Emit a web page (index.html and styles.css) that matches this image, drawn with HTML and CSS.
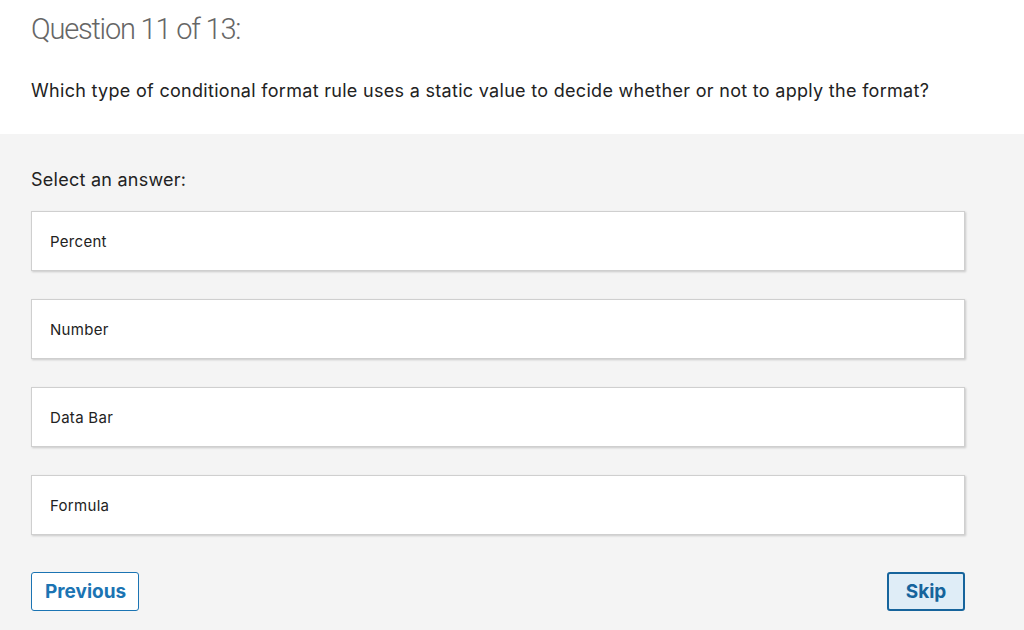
FILE: index.html
```html
<!DOCTYPE html>
<html>
<head>
<meta charset="utf-8">
<link rel="stylesheet" href="styles.css">
</head>
<body>
<header class="head">
  <h1 class="title">Question 11 of 13:</h1>
  <p class="question">Which type of conditional format rule uses a static value to decide whether or not to apply the format?</p>
</header>
<main class="body">
  <p class="prompt">Select an answer:</p>
  <div class="options">
    <div class="option">Percent</div>
    <div class="option">Number</div>
    <div class="option">Data Bar</div>
    <div class="option">Formula</div>
  </div>
  <div class="nav">
    <button class="btn">Previous</button>
    <button class="btn btn-skip">Skip</button>
  </div>
</main>
</body>
</html>
```
FILE: styles.css
```css
html, body { margin: 0; padding: 0; }
body {
  background: #f4f4f4;
  font-family: Inter, "Noto Sans", sans-serif;
  color: #222;
  width: 1024px;
  height: 630px;
  overflow: hidden;
}
.head {
  background: #fff;
  padding: 12px 59px 0 31px;
  height: 122px;
}
.title {
  margin: 0;
  font-family: Roboto, "Liberation Sans", sans-serif;
  font-weight: 300;
  font-size: 29px;
  line-height: 34px;
  color: #666;
  letter-spacing: -1.2px;
}
.question {
  margin: 33px 0 0;
  font-size: 18px;
  line-height: 24px;
  color: #222;
  letter-spacing: 0.3px;
}
.body {
  padding: 0 59px 0 31px;
}
.prompt {
  margin: 0;
  padding-top: 34px;
  font-size: 18px;
  line-height: 24px;
  color: #222;
  letter-spacing: 0.25px;
}
.options {
  margin-top: 19px;
  display: flex;
  flex-direction: column;
  gap: 28px;
}
.option {
  background: #fff;
  border: 1px solid #cfcfcf;
  box-shadow: 1px 1px 2px rgba(0,0,0,0.18);
  height: 58px;
  display: flex;
  align-items: center;
  padding-left: 18px;
  font-size: 15px;
  color: #222;
  letter-spacing: 0.3px;
}
.nav {
  margin-top: 37px;
  display: flex;
  justify-content: space-between;
}
.btn {
  font-family: Inter, "Noto Sans", sans-serif;
  font-weight: 700;
  font-size: 19px;
  color: #1b74b3;
  background: #fff;
  border: 1px solid #1b74b3;
  border-radius: 3px;
  height: 39px;
  padding: 0 13px;
  width: 108px;
}
.btn-skip {
  width: 78px;
  padding: 0;
  border: 2px solid #16649c;
  color: #16649c;
  background: #dfedf7;
}
```
